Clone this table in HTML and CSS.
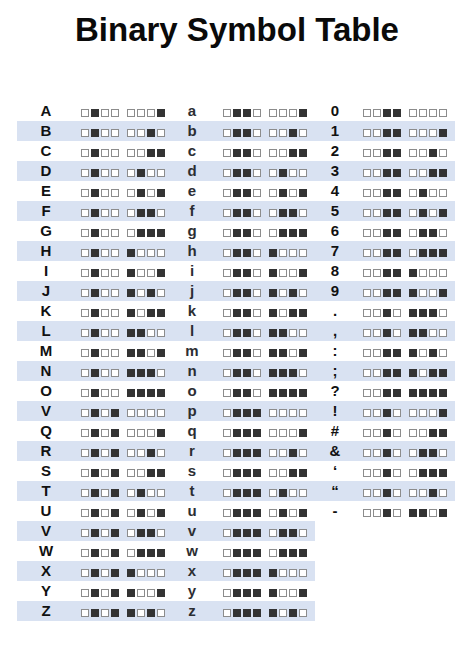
FILE: index.html
```html
<!DOCTYPE html>
<html lang="en">
<head>
<meta charset="utf-8">
<title>Binary Symbol Table</title>
<link rel="stylesheet" href="styles.css">
</head>
<body>
<h1 class="title">Binary Symbol Table</h1>
<div class="table">
  <div class="row"><span class="ch">A</span><span class="k"><i></i><b></b><i></i><i></i><i></i><i></i><i></i><b></b></span><span class="ch lo">a</span><span class="k"><i></i><b></b><b></b><i></i><i></i><i></i><i></i><b></b></span><span class="ch">0</span><span class="k"><i></i><i></i><b></b><b></b><i></i><i></i><i></i><i></i></span></div>
  <div class="row"><span class="ch">B</span><span class="k"><i></i><b></b><i></i><i></i><i></i><i></i><b></b><i></i></span><span class="ch lo">b</span><span class="k"><i></i><b></b><b></b><i></i><i></i><i></i><b></b><i></i></span><span class="ch">1</span><span class="k"><i></i><i></i><b></b><b></b><i></i><i></i><i></i><b></b></span></div>
  <div class="row"><span class="ch">C</span><span class="k"><i></i><b></b><i></i><i></i><i></i><i></i><b></b><b></b></span><span class="ch lo">c</span><span class="k"><i></i><b></b><b></b><i></i><i></i><i></i><b></b><b></b></span><span class="ch">2</span><span class="k"><i></i><i></i><b></b><b></b><i></i><i></i><b></b><i></i></span></div>
  <div class="row"><span class="ch">D</span><span class="k"><i></i><b></b><i></i><i></i><i></i><b></b><i></i><i></i></span><span class="ch lo">d</span><span class="k"><i></i><b></b><b></b><i></i><i></i><b></b><i></i><i></i></span><span class="ch">3</span><span class="k"><i></i><i></i><b></b><b></b><i></i><i></i><b></b><b></b></span></div>
  <div class="row"><span class="ch">E</span><span class="k"><i></i><b></b><i></i><i></i><i></i><b></b><i></i><b></b></span><span class="ch lo">e</span><span class="k"><i></i><b></b><b></b><i></i><i></i><b></b><i></i><b></b></span><span class="ch">4</span><span class="k"><i></i><i></i><b></b><b></b><i></i><b></b><i></i><i></i></span></div>
  <div class="row"><span class="ch">F</span><span class="k"><i></i><b></b><i></i><i></i><i></i><b></b><b></b><i></i></span><span class="ch lo">f</span><span class="k"><i></i><b></b><b></b><i></i><i></i><b></b><b></b><i></i></span><span class="ch">5</span><span class="k"><i></i><i></i><b></b><b></b><i></i><b></b><i></i><b></b></span></div>
  <div class="row"><span class="ch">G</span><span class="k"><i></i><b></b><i></i><i></i><i></i><b></b><b></b><b></b></span><span class="ch lo">g</span><span class="k"><i></i><b></b><b></b><i></i><i></i><b></b><b></b><b></b></span><span class="ch">6</span><span class="k"><i></i><i></i><b></b><b></b><i></i><b></b><b></b><i></i></span></div>
  <div class="row"><span class="ch">H</span><span class="k"><i></i><b></b><i></i><i></i><b></b><i></i><i></i><i></i></span><span class="ch lo">h</span><span class="k"><i></i><b></b><b></b><i></i><b></b><i></i><i></i><i></i></span><span class="ch">7</span><span class="k"><i></i><i></i><b></b><b></b><i></i><b></b><b></b><b></b></span></div>
  <div class="row"><span class="ch">I</span><span class="k"><i></i><b></b><i></i><i></i><b></b><i></i><i></i><b></b></span><span class="ch lo">i</span><span class="k"><i></i><b></b><b></b><i></i><b></b><i></i><i></i><b></b></span><span class="ch">8</span><span class="k"><i></i><i></i><b></b><b></b><b></b><i></i><i></i><i></i></span></div>
  <div class="row"><span class="ch">J</span><span class="k"><i></i><b></b><i></i><i></i><b></b><i></i><b></b><i></i></span><span class="ch lo">j</span><span class="k"><i></i><b></b><b></b><i></i><b></b><i></i><b></b><i></i></span><span class="ch">9</span><span class="k"><i></i><i></i><b></b><b></b><b></b><i></i><i></i><b></b></span></div>
  <div class="row"><span class="ch">K</span><span class="k"><i></i><b></b><i></i><i></i><b></b><i></i><b></b><b></b></span><span class="ch lo">k</span><span class="k"><i></i><b></b><b></b><i></i><b></b><i></i><b></b><b></b></span><span class="ch">.</span><span class="k"><i></i><i></i><b></b><i></i><b></b><b></b><b></b><i></i></span></div>
  <div class="row"><span class="ch">L</span><span class="k"><i></i><b></b><i></i><i></i><b></b><b></b><i></i><i></i></span><span class="ch lo">l</span><span class="k"><i></i><b></b><b></b><i></i><b></b><b></b><i></i><i></i></span><span class="ch">,</span><span class="k"><i></i><i></i><b></b><i></i><b></b><b></b><i></i><i></i></span></div>
  <div class="row"><span class="ch">M</span><span class="k"><i></i><b></b><i></i><i></i><b></b><b></b><i></i><b></b></span><span class="ch lo">m</span><span class="k"><i></i><b></b><b></b><i></i><b></b><b></b><i></i><b></b></span><span class="ch">:</span><span class="k"><i></i><i></i><b></b><b></b><b></b><i></i><b></b><i></i></span></div>
  <div class="row"><span class="ch">N</span><span class="k"><i></i><b></b><i></i><i></i><b></b><b></b><b></b><i></i></span><span class="ch lo">n</span><span class="k"><i></i><b></b><b></b><i></i><b></b><b></b><b></b><i></i></span><span class="ch">;</span><span class="k"><i></i><i></i><b></b><b></b><b></b><i></i><b></b><b></b></span></div>
  <div class="row"><span class="ch">O</span><span class="k"><i></i><b></b><i></i><i></i><b></b><b></b><b></b><b></b></span><span class="ch lo">o</span><span class="k"><i></i><b></b><b></b><i></i><b></b><b></b><b></b><b></b></span><span class="ch">?</span><span class="k"><i></i><i></i><b></b><b></b><b></b><b></b><b></b><b></b></span></div>
  <div class="row"><span class="ch">V</span><span class="k"><i></i><b></b><i></i><b></b><i></i><i></i><i></i><i></i></span><span class="ch lo">p</span><span class="k"><i></i><b></b><b></b><b></b><i></i><i></i><i></i><i></i></span><span class="ch">!</span><span class="k"><i></i><i></i><b></b><i></i><i></i><i></i><i></i><b></b></span></div>
  <div class="row"><span class="ch">Q</span><span class="k"><i></i><b></b><i></i><b></b><i></i><i></i><i></i><b></b></span><span class="ch lo">q</span><span class="k"><i></i><b></b><b></b><b></b><i></i><i></i><i></i><b></b></span><span class="ch">#</span><span class="k"><i></i><i></i><b></b><i></i><i></i><i></i><b></b><b></b></span></div>
  <div class="row"><span class="ch">R</span><span class="k"><i></i><b></b><i></i><b></b><i></i><i></i><b></b><i></i></span><span class="ch lo">r</span><span class="k"><i></i><b></b><b></b><b></b><i></i><i></i><b></b><i></i></span><span class="ch">&amp;</span><span class="k"><i></i><i></i><b></b><i></i><i></i><b></b><b></b><i></i></span></div>
  <div class="row"><span class="ch">S</span><span class="k"><i></i><b></b><i></i><b></b><i></i><i></i><b></b><b></b></span><span class="ch lo">s</span><span class="k"><i></i><b></b><b></b><b></b><i></i><i></i><b></b><b></b></span><span class="ch">&lsquo;</span><span class="k"><i></i><i></i><b></b><i></i><i></i><b></b><b></b><b></b></span></div>
  <div class="row"><span class="ch">T</span><span class="k"><i></i><b></b><i></i><b></b><i></i><b></b><i></i><i></i></span><span class="ch lo">t</span><span class="k"><i></i><b></b><b></b><b></b><i></i><b></b><i></i><i></i></span><span class="ch">&ldquo;</span><span class="k"><i></i><i></i><b></b><i></i><i></i><i></i><b></b><i></i></span></div>
  <div class="row"><span class="ch">U</span><span class="k"><i></i><b></b><i></i><b></b><i></i><b></b><i></i><b></b></span><span class="ch lo">u</span><span class="k"><i></i><b></b><b></b><b></b><i></i><b></b><i></i><b></b></span><span class="ch">-</span><span class="k"><i></i><i></i><b></b><i></i><b></b><b></b><i></i><b></b></span></div>
  <div class="row short"><span class="ch">V</span><span class="k"><i></i><b></b><i></i><b></b><i></i><b></b><b></b><i></i></span><span class="ch lo">v</span><span class="k"><i></i><b></b><b></b><b></b><i></i><b></b><b></b><i></i></span></div>
  <div class="row short"><span class="ch">W</span><span class="k"><i></i><b></b><i></i><b></b><i></i><b></b><b></b><b></b></span><span class="ch lo">w</span><span class="k"><i></i><b></b><b></b><b></b><i></i><b></b><b></b><b></b></span></div>
  <div class="row short"><span class="ch">X</span><span class="k"><i></i><b></b><i></i><b></b><b></b><i></i><i></i><i></i></span><span class="ch lo">x</span><span class="k"><i></i><b></b><b></b><b></b><b></b><i></i><i></i><i></i></span></div>
  <div class="row short"><span class="ch">Y</span><span class="k"><i></i><b></b><i></i><b></b><b></b><i></i><i></i><b></b></span><span class="ch lo">y</span><span class="k"><i></i><b></b><b></b><b></b><b></b><i></i><i></i><b></b></span></div>
  <div class="row short"><span class="ch">Z</span><span class="k"><i></i><b></b><i></i><b></b><b></b><i></i><b></b><i></i></span><span class="ch lo">z</span><span class="k"><i></i><b></b><b></b><b></b><b></b><i></i><b></b><i></i></span></div>
</div>
</body>
</html>
```
FILE: styles.css
```css
html, body {
  margin: 0;
  padding: 0;
  background: #ffffff;
}

body {
  font-family: "Liberation Sans", Arial, sans-serif;
  color: #111111;
}

.title {
  margin: 0;
  padding-top: 11px;
  font-size: 33px;
  line-height: 38px;
  font-weight: bold;
  text-align: center;
  color: #0a0a0a;
}

.table {
  margin-top: 52px;
  padding-left: 17px;
  display: flex;
  flex-direction: column;
  align-items: flex-start;
}

.row {
  display: grid;
  grid-template-columns: 58px 96px 42px 102px 40px 100px;
  height: 20px;
  align-items: start;
}

.row.short {
  grid-template-columns: 58px 96px 42px 102px;
}

.row:nth-child(even) {
  background: #d9e2f2;
}

.ch {
  display: block;
  text-align: center;
  font-size: 15px;
  line-height: 20px;
  font-weight: bold;
  color: #111111;
}

.ch.lo {
  color: #2c2e33;
}

.k {
  display: flex;
  gap: 2px;
  padding-top: 8px;
}

.row > .k:nth-child(2) {
  padding-left: 6px;
}

.row > .k:nth-child(4) {
  padding-left: 10px;
}

.row > .k:nth-child(6) {
  padding-left: 8px;
}

.k > :nth-child(5) {
  margin-left: 6px;
}

.k i,
.k b {
  display: block;
  width: 8px;
  height: 8px;
  box-sizing: border-box;
}

.k i {
  border: 1px solid #8c8c8c;
  background: #ffffff;
}

.k b {
  background: #333333;
}
```
